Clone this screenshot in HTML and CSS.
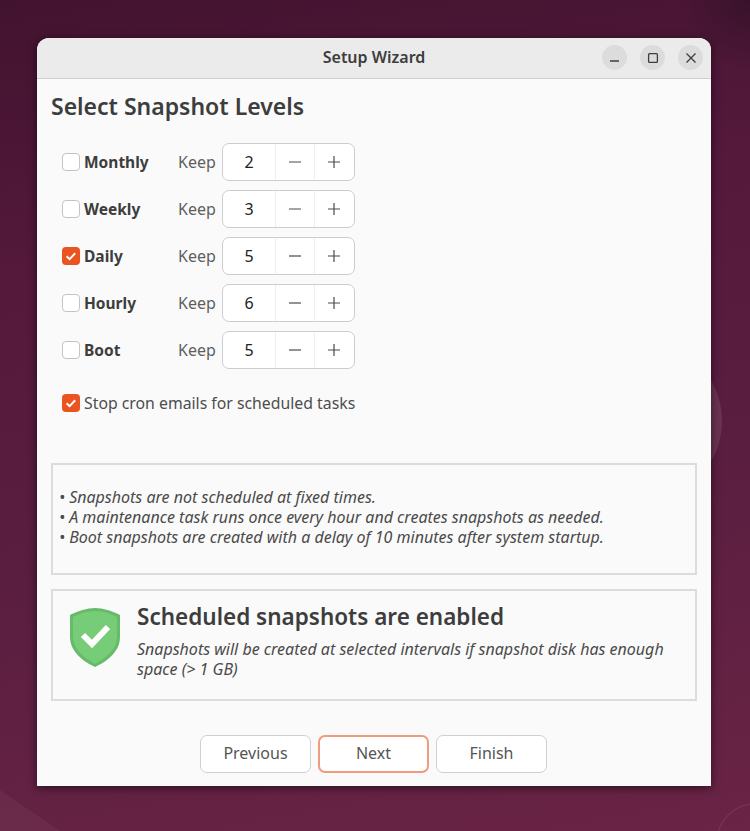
FILE: index.html
```html
<!DOCTYPE html>
<html lang="en">
<head>
    <meta charset="UTF-8">
    <meta name="viewport" content="width=device-width, initial-scale=1.0">
    <title>Setup Wizard</title>
    <link rel="stylesheet" href="styles.css">
</head>
<body>
    <!-- Faint wallpaper shapes -->
    <div class="wallpaper">
        <div class="ring ring-right"></div>
        <div class="ring ring-corner"></div>
        <div class="wedge"></div>
    </div>

    <div class="window">
        <header class="titlebar">
            <span class="title">Setup Wizard</span>
            <div class="win-controls">
                <button class="win-btn"><svg width="16" height="16" viewBox="0 0 16 16"><path d="M3 11h9" stroke="#3d3d3d" stroke-width="1.3" fill="none"/></svg></button>
                <button class="win-btn"><svg width="16" height="16" viewBox="0 0 16 16"><rect x="3.6" y="3.6" width="8.8" height="8.8" rx="1" stroke="#3d3d3d" stroke-width="1.3" fill="none"/></svg></button>
                <button class="win-btn"><svg width="16" height="16" viewBox="0 0 16 16"><path d="M3.5 3.5l9 9M12.5 3.5l-9 9" stroke="#3d3d3d" stroke-width="1.3" fill="none"/></svg></button>
            </div>
        </header>

        <main class="content">
            <h1>Select Snapshot Levels</h1>

            <div class="levels">
                <div class="level">
                    <span class="check"></span>
                    <span class="level-name">Monthly</span>
                    <span class="keep">Keep</span>
                    <div class="spin">
                        <span class="spin-value">2</span>
                        <span class="spin-btn"><svg width="14" height="14" viewBox="0 0 14 14"><path d="M1 7h12" stroke="#4a4a4a" stroke-width="1.2"/></svg></span>
                        <span class="spin-btn"><svg width="14" height="14" viewBox="0 0 14 14"><path d="M1 7h12M7 1v12" stroke="#4a4a4a" stroke-width="1.2"/></svg></span>
                    </div>
                </div>
                <div class="level">
                    <span class="check"></span>
                    <span class="level-name">Weekly</span>
                    <span class="keep">Keep</span>
                    <div class="spin">
                        <span class="spin-value">3</span>
                        <span class="spin-btn"><svg width="14" height="14" viewBox="0 0 14 14"><path d="M1 7h12" stroke="#4a4a4a" stroke-width="1.2"/></svg></span>
                        <span class="spin-btn"><svg width="14" height="14" viewBox="0 0 14 14"><path d="M1 7h12M7 1v12" stroke="#4a4a4a" stroke-width="1.2"/></svg></span>
                    </div>
                </div>
                <div class="level">
                    <span class="check checked"><svg width="18" height="18" viewBox="0 0 18 18"><path d="M4.600 9.200l3 2.900 5.600-5.800" stroke="#fff" stroke-width="2" fill="none"/></svg></span>
                    <span class="level-name">Daily</span>
                    <span class="keep">Keep</span>
                    <div class="spin">
                        <span class="spin-value">5</span>
                        <span class="spin-btn"><svg width="14" height="14" viewBox="0 0 14 14"><path d="M1 7h12" stroke="#4a4a4a" stroke-width="1.2"/></svg></span>
                        <span class="spin-btn"><svg width="14" height="14" viewBox="0 0 14 14"><path d="M1 7h12M7 1v12" stroke="#4a4a4a" stroke-width="1.2"/></svg></span>
                    </div>
                </div>
                <div class="level">
                    <span class="check"></span>
                    <span class="level-name">Hourly</span>
                    <span class="keep">Keep</span>
                    <div class="spin">
                        <span class="spin-value">6</span>
                        <span class="spin-btn"><svg width="14" height="14" viewBox="0 0 14 14"><path d="M1 7h12" stroke="#4a4a4a" stroke-width="1.2"/></svg></span>
                        <span class="spin-btn"><svg width="14" height="14" viewBox="0 0 14 14"><path d="M1 7h12M7 1v12" stroke="#4a4a4a" stroke-width="1.2"/></svg></span>
                    </div>
                </div>
                <div class="level">
                    <span class="check"></span>
                    <span class="level-name">Boot</span>
                    <span class="keep">Keep</span>
                    <div class="spin">
                        <span class="spin-value">5</span>
                        <span class="spin-btn"><svg width="14" height="14" viewBox="0 0 14 14"><path d="M1 7h12" stroke="#4a4a4a" stroke-width="1.2"/></svg></span>
                        <span class="spin-btn"><svg width="14" height="14" viewBox="0 0 14 14"><path d="M1 7h12M7 1v12" stroke="#4a4a4a" stroke-width="1.2"/></svg></span>
                    </div>
                </div>
            </div>

            <div class="cron">
                <span class="check checked"><svg width="18" height="18" viewBox="0 0 18 18"><path d="M4.600 9.200l3 2.900 5.600-5.800" stroke="#fff" stroke-width="2" fill="none"/></svg></span>
                <span>Stop cron emails for scheduled tasks</span>
            </div>

            <div class="box info">
                <p>&#8226; Snapshots are not scheduled at fixed times.</p>
                <p>&#8226; A maintenance task runs once every hour and creates snapshots as needed.</p>
                <p>&#8226; Boot snapshots are created with a delay of 10 minutes after system startup.</p>
            </div>

            <div class="box status">
                <svg class="shield" width="50" height="60" viewBox="0 0 50 60">
                    <path d="M25 0C33 0 42 3 50 7V29C50 43 38 53 25 59C12 53 0 43 0 29V7C8 3 17 0 25 0Z" fill="#66bb6a"/>
                    <path d="M25 3C32 3 40 5 47 9V29C47 41 36 50 25 56C14 50 3 41 3 29V9C10 5 18 3 25 3Z" fill="#77cc77"/>
                    <path d="M13 27l9 9 16-17" stroke="#fff" stroke-width="6" fill="none"/>
                </svg>
                <div class="status-text">
                    <h2>Scheduled snapshots are enabled</h2>
                    <p>Snapshots will be created at selected intervals if snapshot disk has enough space (&gt; 1 GB)</p>
                </div>
            </div>

            <div class="actions">
                <button class="btn">Previous</button>
                <button class="btn btn-focus">Next</button>
                <button class="btn">Finish</button>
            </div>
        </main>
    </div>
</body>
</html>
```

FILE: styles.css
```css
* {
    margin: 0;
    padding: 0;
    box-sizing: border-box;
    font-family: "Noto Sans", "Open Sans", sans-serif;
}

html, body {
    height: 831px;
    overflow: hidden;
}

body {
    position: relative;
    padding: 38px 0 0 37px;
    background:
        radial-gradient(circle at 100% 0, rgba(40, 15, 35, 0.55) 0, rgba(40, 15, 35, 0) 70px),
        linear-gradient(170deg, #42132f 0%, #55193c 30%, #5a1e40 60%, #6a2445 100%);
}

.wallpaper {
    position: absolute;
    inset: 0;
    overflow: hidden;
}

.ring {
    position: absolute;
    border-radius: 50%;
}

.ring-right {
    left: 560px;
    top: 340px;
    width: 162px;
    height: 162px;
    background: rgba(255, 255, 255, 0.1);
}

.ring-corner {
    left: 716px;
    top: 803px;
    width: 80px;
    height: 80px;
    border: 1px solid rgba(255, 255, 255, 0.1);
}

.wedge {
    position: absolute;
    left: 0;
    top: 790px;
    width: 0;
    height: 0;
    border-top: 41px solid transparent;
    border-left: 60px solid rgba(255, 255, 255, 0.04);
}

.window {
    position: relative;
    width: 674px;
    height: 748px;
    border-radius: 12px 12px 0 0;
    background: #fafafa;
    box-shadow: 0 2px 10px rgba(0, 0, 0, 0.55);
    overflow: hidden;
}

.titlebar {
    position: relative;
    height: 41px;
    padding-bottom: 2px;
    background: #ebebeb;
    border-bottom: 1px solid #cfcfcf;
    display: flex;
    justify-content: center;
    align-items: center;
}

.title {
    font-size: 16px;
    font-weight: 600;
    color: #3d3d3d;
}

.win-controls {
    position: absolute;
    right: 8px;
    top: 7px;
    display: flex;
    gap: 13px;
}

.win-btn {
    width: 25px;
    height: 25px;
    border: none;
    border-radius: 50%;
    background: #dcdcdc;
    display: flex;
    justify-content: center;
    align-items: center;
}

.content {
    padding: 12px 14px 0 14px;
}

h1 {
    font-size: 23px;
    line-height: 30px;
    font-weight: 600;
    color: #3d3d3d;
    margin-bottom: 22px;
}

.levels {
    display: flex;
    flex-direction: column;
    gap: 9px;
    padding-left: 11px;
}

.level {
    display: grid;
    grid-template-columns: 18px 98px 44px auto;
    align-items: center;
    height: 38px;
    font-size: 16px;
    color: #3d3d3d;
}

.check {
    width: 18px;
    height: 18px;
    border: 1px solid #c4c4c4;
    border-radius: 4px;
    background: #fff;
    display: block;
}

.check.checked {
    border: none;
    background: #e95420;
}

.check svg {
    display: block;
}

.level-name {
    padding: 0 0 1px 4px;
    font-size: 15.5px;
    font-weight: 700;
}

.keep {
    padding-bottom: 1px;
    color: #5e5e5e;
}

.spin {
    width: 133px;
    height: 38px;
    border: 1px solid #cdcdcd;
    border-radius: 7px;
    background: #fff;
    display: flex;
    align-items: center;
}

.spin-value {
    width: 52px;
    text-align: center;
    color: #222;
}

.spin-btn {
    flex: 1;
    height: 100%;
    border-left: 1px solid #eeeeee;
    display: flex;
    justify-content: center;
    align-items: center;
}

.spin-btn:last-child {
    padding-right: 1px;
}

.cron {
    display: flex;
    align-items: center;
    gap: 4px;
    margin: 22px 0 0 11px;
    height: 24px;
    font-size: 15.8px;
    color: #4d4d4d;
}

.box {
    border: 2px solid #dcdcdc;
    width: 646px;
    height: 112px;
}

.info {
    margin-top: 48px;
    padding: 22px 0 0 6px;
    font-size: 16px;
    line-height: 20px;
    font-style: italic;
    color: #4a4a4a;
}

.status {
    margin-top: 14px;
    padding: 13px 0 0 17px;
    display: flex;
    gap: 17px;
}

.shield {
    flex-shrink: 0;
    margin-top: 4px;
}

.status-text h2 {
    font-size: 22.5px;
    line-height: 26px;
    font-weight: 600;
    color: #3d3d3d;
    margin-bottom: 9px;
}

.status-text p {
    font-size: 16px;
    line-height: 20px;
    font-style: italic;
    color: #4a4a4a;
    width: 540px;
}

.actions {
    display: flex;
    justify-content: center;
    gap: 7px;
    margin-top: 34px;
    padding-right: 1px;
}

.btn {
    width: 111px;
    height: 38px;
    padding-bottom: 2px;
    border: 1px solid #d0d0d0;
    border-radius: 7px;
    background: #fff;
    font-size: 16px;
    color: #555;
}

.btn-focus {
    border: 2px solid #ef9c7e;
}
```
